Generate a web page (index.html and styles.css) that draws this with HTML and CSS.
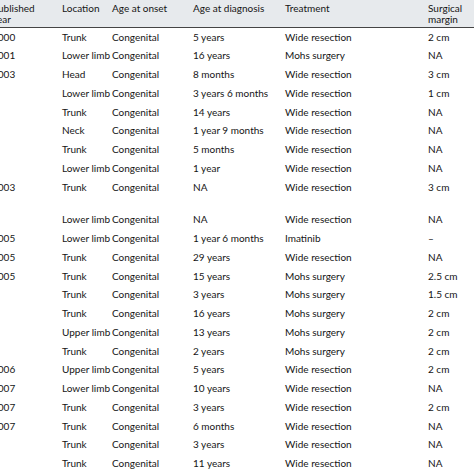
FILE: index.html
```html
<!DOCTYPE html>
<html>
<head>
<meta charset="utf-8">
<link rel="stylesheet" href="styles.css">
</head>
<body>
<table class="tbl">
  <colgroup>
    <col class="c-year"><col class="c-loc"><col class="c-onset"><col class="c-diag"><col class="c-treat"><col class="c-margin">
  </colgroup>
  <thead>
    <tr><th>Published<br>year</th><th>Location</th><th>Age at onset</th><th>Age at diagnosis</th><th>Treatment</th><th>Surgical<br>margin</th></tr>
  </thead>
  <tbody>
    <tr><td>2000</td><td>Trunk</td><td>Congenital</td><td>5 years</td><td>Wide resection</td><td>2 cm</td></tr>
    <tr><td>2001</td><td>Lower limb</td><td>Congenital</td><td>16 years</td><td>Mohs surgery</td><td>NA</td></tr>
    <tr><td>2003</td><td>Head</td><td>Congenital</td><td>8 months</td><td>Wide resection</td><td>3 cm</td></tr>
    <tr><td></td><td>Lower limb</td><td>Congenital</td><td>3 years 6 months</td><td>Wide resection</td><td>1 cm</td></tr>
    <tr><td></td><td>Trunk</td><td>Congenital</td><td>14 years</td><td>Wide resection</td><td>NA</td></tr>
    <tr><td></td><td>Neck</td><td>Congenital</td><td>1 year 9 months</td><td>Wide resection</td><td>NA</td></tr>
    <tr><td></td><td>Trunk</td><td>Congenital</td><td>5 months</td><td>Wide resection</td><td>NA</td></tr>
    <tr><td></td><td>Lower limb</td><td>Congenital</td><td>1 year</td><td>Wide resection</td><td>NA</td></tr>
    <tr><td>2003</td><td>Trunk</td><td>Congenital</td><td>NA</td><td>Wide resection</td><td>3 cm</td></tr>
    <tr class="gap"><td></td><td>Lower limb</td><td>Congenital</td><td>NA</td><td>Wide resection</td><td>NA</td></tr>
    <tr><td>2005</td><td>Lower limb</td><td>Congenital</td><td>1 year 6 months</td><td>Imatinib</td><td>–</td></tr>
    <tr><td>2005</td><td>Trunk</td><td>Congenital</td><td>29 years</td><td>Wide resection</td><td>NA</td></tr>
    <tr><td>2005</td><td>Trunk</td><td>Congenital</td><td>15 years</td><td>Mohs surgery</td><td>2.5 cm</td></tr>
    <tr><td></td><td>Trunk</td><td>Congenital</td><td>3 years</td><td>Mohs surgery</td><td>1.5 cm</td></tr>
    <tr><td></td><td>Trunk</td><td>Congenital</td><td>16 years</td><td>Mohs surgery</td><td>2 cm</td></tr>
    <tr><td></td><td>Upper limb</td><td>Congenital</td><td>13 years</td><td>Mohs surgery</td><td>2 cm</td></tr>
    <tr><td></td><td>Trunk</td><td>Congenital</td><td>2 years</td><td>Mohs surgery</td><td>2 cm</td></tr>
    <tr><td>2006</td><td>Upper limb</td><td>Congenital</td><td>5 years</td><td>Wide resection</td><td>2 cm</td></tr>
    <tr><td>2007</td><td>Lower limb</td><td>Congenital</td><td>10 years</td><td>Wide resection</td><td>NA</td></tr>
    <tr><td>2007</td><td>Trunk</td><td>Congenital</td><td>3 years</td><td>Wide resection</td><td>2 cm</td></tr>
    <tr><td>2007</td><td>Trunk</td><td>Congenital</td><td>6 months</td><td>Wide resection</td><td>NA</td></tr>
    <tr><td></td><td>Trunk</td><td>Congenital</td><td>3 years</td><td>Wide resection</td><td>NA</td></tr>
    <tr><td></td><td>Trunk</td><td>Congenital</td><td>11 years</td><td>Wide resection</td><td>NA</td></tr>
  </tbody>
</table>
</body>
</html>
```

FILE: styles.css
```css
html, body {
  margin: 0;
  padding: 0;
  background: #ffffff;
  overflow: hidden;
  width: 474px;
  height: 474px;
}

.tbl {
  border-collapse: collapse;
  table-layout: fixed;
  width: 500px;
  margin-left: -8px;
  font-family: Lato, "Liberation Sans", sans-serif;
  font-size: 10px;
  color: #151515;
}

.c-year { width: 70px; }
.c-loc { width: 50px; }
.c-onset { width: 81px; }
.c-diag { width: 92px; }
.c-treat { width: 143px; }
.c-margin { width: 64px; }

.tbl th,
.tbl td {
  padding: 0;
  text-align: left;
  white-space: nowrap;
  overflow: visible;
}

.tbl thead th {
  height: 27px;
  box-sizing: border-box;
  padding-top: 3px;
  vertical-align: top;
  line-height: 11px;
  font-weight: normal;
  background: #e7eaed;
  border-bottom: 1px solid #444444;
}

.tbl tbody td {
  height: 18.75px;
  line-height: 18.75px;
  vertical-align: middle;
}

.tbl tr.gap td {
  padding-top: 14px;
}
```
